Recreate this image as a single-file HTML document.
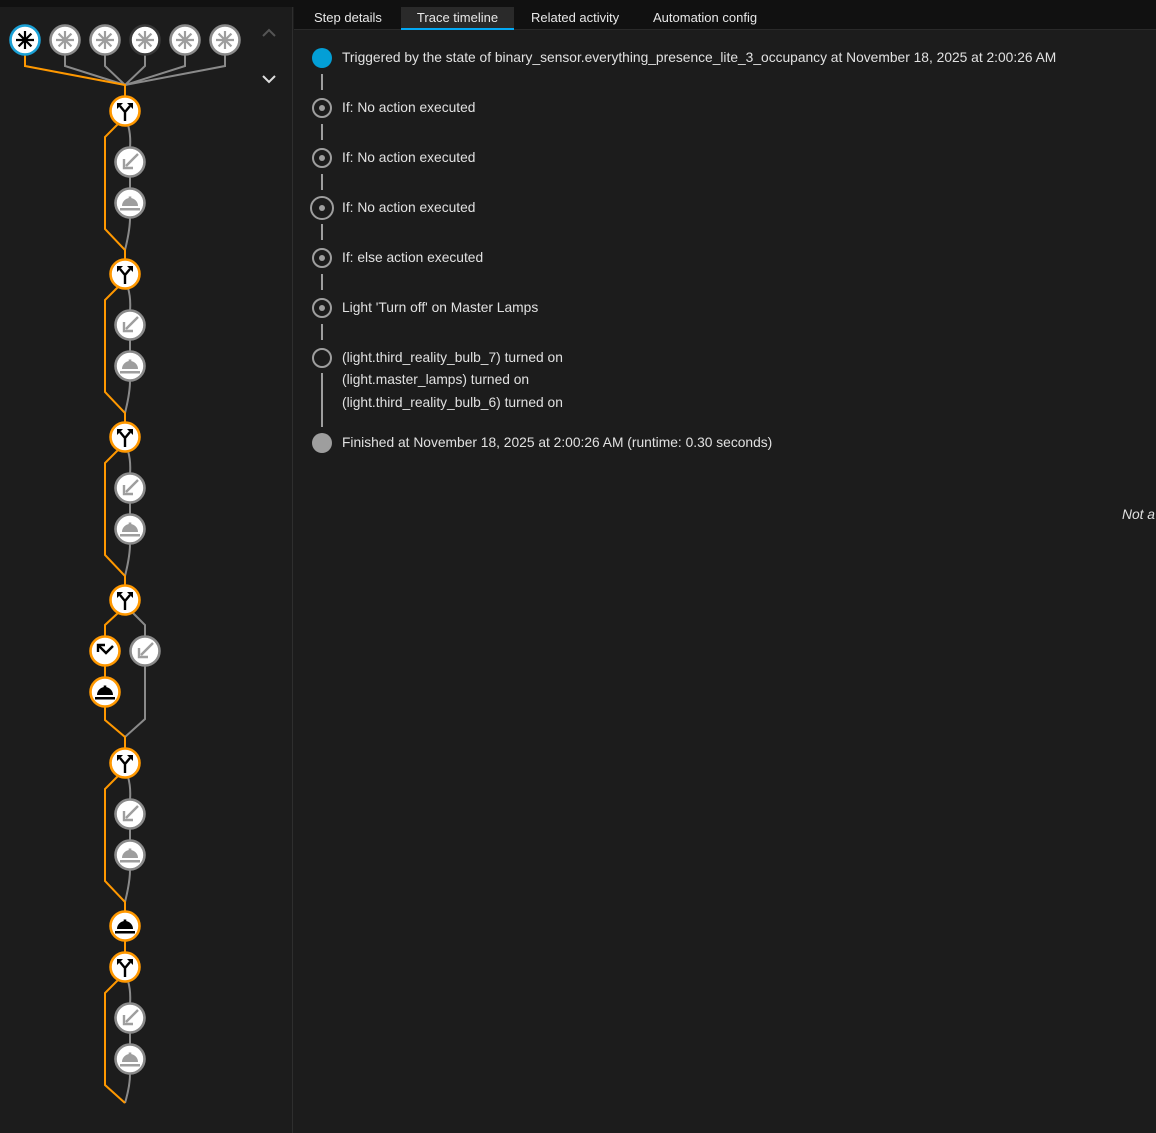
<!DOCTYPE html>
<html><head><meta charset="utf-8"><style>
*{margin:0;padding:0;box-sizing:border-box}
body{width:1156px;height:1133px;background:#1c1c1c;font-family:"Liberation Sans",Roboto,sans-serif;overflow:hidden;position:relative;color:#e1e1e1}
.top{position:absolute;left:0;top:0;width:1156px;height:7px;background:#111}
.left{position:absolute;left:0;top:7px;width:293px;height:1126px;background:#1c1c1c;border-right:1px solid #2e2e2e}
.tabs{position:absolute;left:294px;top:7px;right:0;height:23px;background:#111;border-bottom:1px solid #2a2a2a}
.tab{position:absolute;top:0;height:23px;line-height:22px;font-size:13px;color:#e8e8e8}
.tab.active{background:#2a2a2a;border-bottom:2px solid #03a9f4}
.row{position:absolute;left:342px;font-size:13.8px;color:#e1e1e1;white-space:nowrap}
.vl{position:absolute;left:321px;width:2px;background:#9e9e9e}
.ic{position:absolute;left:312px;width:20px;height:20px;border-radius:50%}
.ring{border:2px solid #9e9e9e}
.ring i{position:absolute;left:5px;top:5px;width:6px;height:6px;border-radius:50%;background:#9e9e9e}
</style></head><body>
<div class="top"></div>
<div class="left">
<svg width="293" height="1126" viewBox="0 7 293 1126" style="position:absolute;left:0;top:0">
<defs>
<g id="ast"><path d="M0-9V9M-9 0H9M-6.4-6.4L6.4 6.4M-6.4 6.4L6.4-6.4" stroke-width="2.2"/></g>
<g id="fork"><path d="M0 10V1L-5-5M0 1L5-5" fill="none" stroke-width="2.4"/><path d="M-8-8H-2L-8-2ZM8-8H2L8-2Z" stroke="none"/></g>
<g id="arr"><path d="M8-8L-4 4M-6-3V6H3" fill="none" stroke-width="2.4"/></g>
<g id="bell"><path d="M-8 3A8 8 0 0 1 8 3Z M-10 5H10V7.5H-10Z M-1.3-6.5H1.3V-4.5H-1.3Z" stroke="none"/></g>
<g id="cond"><path d="M-7 1V-6H0M-7-6L-1 0L1 2L8-5" fill="none" stroke-width="2.4"/></g>
</defs>
<g fill="none" stroke-width="2">
<path d="M65 55V66L125 85M105 55V66L125 85M145 55V66L125 85M185 55V66L125 85M225 55V66L125 85" stroke="#8a8a8a"/>
<path d="M25 55V66L125 85V97" stroke="#ff9800"/>
<path d="M128 125Q131 135 130 148M130 177V188M130 218Q130 230 125 250" stroke="#8a8a8a"/>
<path d="M128 288Q131 298 130 311M130 340V351M130 381Q130 393 125 413" stroke="#8a8a8a"/>
<path d="M128 451Q131 461 130 474M130 503V514M130 544Q130 556 125 576" stroke="#8a8a8a"/>
<path d="M128 777Q131 787 130 800M130 829V840M130 870Q130 882 125 902" stroke="#8a8a8a"/>
<path d="M128 981Q131 991 130 1004M130 1033V1044M130 1074Q130 1086 125 1103" stroke="#8a8a8a"/>
<path d="M132 612L145 625V719L125 737" stroke="#8a8a8a"/>
<path d="M118 124L105 137V229L125 250V274" stroke="#ff9800"/>
<path d="M118 287L105 300V392L125 413V437" stroke="#ff9800"/>
<path d="M118 450L105 463V555L125 576V600" stroke="#ff9800"/>
<path d="M118 613L105 625V720L125 737V763" stroke="#ff9800"/>
<path d="M118 776L105 789V881L125 902V967" stroke="#ff9800"/>
<path d="M118 980L105 993V1085L125 1103" stroke="#ff9800"/>
</g>
<g stroke-width="2.6" fill="#fff">
<circle cx="25" cy="40" r="14.5" stroke="#1ba1d6"/>
<circle cx="65" cy="40" r="14.5" stroke="#8a8a8a"/>
<circle cx="105" cy="40" r="14.5" stroke="#8a8a8a"/>
<circle cx="145" cy="40" r="14.5" stroke="#3a3a3a"/>
<circle cx="185" cy="40" r="14.5" stroke="#8a8a8a"/>
<circle cx="225" cy="40" r="14.5" stroke="#8a8a8a"/>
<circle cx="125" cy="111" r="14.5" stroke="#ff9800"/>
<circle cx="125" cy="274" r="14.5" stroke="#ff9800"/>
<circle cx="125" cy="437" r="14.5" stroke="#ff9800"/>
<circle cx="125" cy="600" r="14.5" stroke="#ff9800"/>
<circle cx="125" cy="763" r="14.5" stroke="#ff9800"/>
<circle cx="125" cy="926" r="14.5" stroke="#ff9800"/>
<circle cx="125" cy="967" r="14.5" stroke="#ff9800"/>
<circle cx="105" cy="651" r="14.5" stroke="#ff9800"/>
<circle cx="105" cy="692" r="14.5" stroke="#ff9800"/>
<circle cx="145" cy="651" r="14.5" stroke="#8a8a8a"/>
<circle cx="130" cy="162" r="14.5" stroke="#8a8a8a"/><circle cx="130" cy="203" r="14.5" stroke="#8a8a8a"/>
<circle cx="130" cy="325" r="14.5" stroke="#8a8a8a"/><circle cx="130" cy="366" r="14.5" stroke="#8a8a8a"/>
<circle cx="130" cy="488" r="14.5" stroke="#8a8a8a"/><circle cx="130" cy="529" r="14.5" stroke="#8a8a8a"/>
<circle cx="130" cy="814" r="14.5" stroke="#8a8a8a"/><circle cx="130" cy="855" r="14.5" stroke="#8a8a8a"/>
<circle cx="130" cy="1018" r="14.5" stroke="#8a8a8a"/><circle cx="130" cy="1059" r="14.5" stroke="#8a8a8a"/>
</g>
<use href="#ast" x="25" y="40" stroke="#000"/>
<g stroke="#9e9e9e"><use href="#ast" x="65" y="40"/><use href="#ast" x="105" y="40"/><use href="#ast" x="145" y="40"/><use href="#ast" x="185" y="40"/><use href="#ast" x="225" y="40"/></g>
<g stroke="#000" fill="#000">
<use href="#fork" x="125" y="111"/><use href="#fork" x="125" y="274"/><use href="#fork" x="125" y="437"/><use href="#fork" x="125" y="600"/><use href="#fork" x="125" y="763"/><use href="#fork" x="125" y="967"/>
<use href="#bell" x="125" y="926"/><use href="#bell" x="105" y="692"/><use href="#cond" x="105" y="651"/>
</g>
<g stroke="#9e9e9e" fill="#9e9e9e">
<use href="#arr" x="130" y="162"/><use href="#arr" x="130" y="325"/><use href="#arr" x="130" y="488"/><use href="#arr" x="130" y="814"/><use href="#arr" x="130" y="1018"/><use href="#arr" x="145" y="651"/>
<use href="#bell" x="130" y="203"/><use href="#bell" x="130" y="366"/><use href="#bell" x="130" y="529"/><use href="#bell" x="130" y="855"/><use href="#bell" x="130" y="1059"/>
</g>
<path d="M263 36L269 30L275 36" fill="none" stroke="#555" stroke-width="2"/>
<path d="M263 76L269 82L275 76" fill="none" stroke="#ddd" stroke-width="2"/>
</svg>
</div>
<div class="tabs">
<div class="tab" style="left:20px">Step details</div>
<div class="tab active" style="left:107px;width:113px;text-align:center">Trace timeline</div>
<div class="tab" style="left:237px">Related activity</div>
<div class="tab" style="left:359px">Automation config</div>
</div>
<div class="ic" style="top:48px;background:#039fd6"></div>
<div class="row" style="top:50px">Triggered by the state of binary_sensor.everything_presence_lite_3_occupancy at November 18, 2025 at 2:00:26 AM</div>
<div class="vl" style="top:74px;height:16px"></div>
<div class="ic ring" style="top:98px"><i></i></div>
<div class="row" style="top:100px">If: No action executed</div>
<div class="vl" style="top:124px;height:16px"></div>
<div class="ic ring" style="top:148px"><i></i></div>
<div class="row" style="top:150px">If: No action executed</div>
<div class="vl" style="top:174px;height:16px"></div>
<div class="ic ring" style="top:196px;left:310px;width:24px;height:24px"><i style="left:7px;top:7px"></i></div>
<div class="row" style="top:200px">If: No action executed</div>
<div class="vl" style="top:224px;height:16px"></div>
<div class="ic ring" style="top:248px"><i></i></div>
<div class="row" style="top:250px">If: else action executed</div>
<div class="vl" style="top:274px;height:16px"></div>
<div class="ic ring" style="top:298px"><i></i></div>
<div class="row" style="top:300px">Light 'Turn off' on Master Lamps</div>
<div class="vl" style="top:324px;height:16px"></div>
<div class="ic ring" style="top:348px"></div>
<div class="row" style="top:350px">(light.third_reality_bulb_7) turned on</div>
<div class="row" style="top:372px">(light.master_lamps) turned on</div>
<div class="row" style="top:395px">(light.third_reality_bulb_6) turned on</div>
<div class="vl" style="top:373px;height:54px"></div>
<div class="ic" style="top:433px;background:#9e9e9e"></div>
<div class="row" style="top:435px">Finished at November 18, 2025 at 2:00:26 AM (runtime: 0.30 seconds)</div>
<div class="row" style="top:507px;left:1122px;font-style:italic">Not a</div>
</body></html>
